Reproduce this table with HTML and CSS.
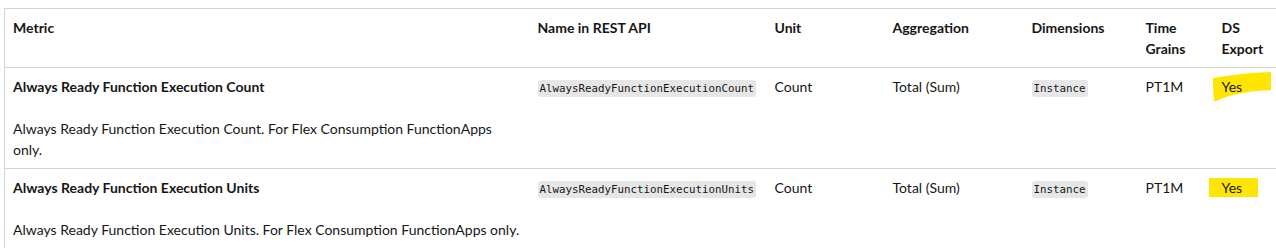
FILE: index.html
```html
<!DOCTYPE html>
<html lang="en">
<head>
<meta charset="utf-8">
<title>Metrics</title>
<link rel="stylesheet" href="styles.css">
</head>
<body>
<table class="metrics">
  <colgroup>
    <col class="c-metric"><col class="c-rest"><col class="c-unit"><col class="c-agg"><col class="c-dim"><col class="c-grain"><col class="c-ds">
  </colgroup>
  <thead>
    <tr>
      <th>Metric</th>
      <th>Name in REST API</th>
      <th>Unit</th>
      <th>Aggregation</th>
      <th>Dimensions</th>
      <th>Time Grains</th>
      <th>DS Export</th>
    </tr>
  </thead>
  <tbody>
    <tr>
      <td><strong>Always Ready Function Execution Count</strong><br><br>Always Ready Function Execution Count. For Flex Consumption FunctionApps only.</td>
      <td><code>AlwaysReadyFunctionExecutionCount</code></td>
      <td>Count</td>
      <td>Total (Sum)</td>
      <td><code>Instance</code></td>
      <td>PT1M</td>
      <td class="ds"><span class="mark mark-drawn"><svg class="marker" viewBox="0 0 60 30" width="60" height="30" aria-hidden="true"><path d="M1 6 C15 4 30 1 59 0 L59 18 C40 19 22 21 4 29 L2 29 C1 20 1 12 1 6 Z" fill="#ffe600"/></svg><span class="mark-text">Yes</span></span></td>
    </tr>
    <tr>
      <td><strong>Always Ready Function Execution Units</strong><br><br>Always Ready Function Execution Units. For Flex Consumption FunctionApps only.</td>
      <td><code>AlwaysReadyFunctionExecutionUnits</code></td>
      <td>Count</td>
      <td>Total (Sum)</td>
      <td><code>Instance</code></td>
      <td>PT1M</td>
      <td class="ds"><span class="mark mark-box">Yes</span></td>
    </tr>
  </tbody>
</table>
</body>
</html>
```

FILE: styles.css
```css
html, body {
  background: #ffffff;
}
body {
  margin: 8px 0 0 4px;
  overflow: hidden;
  font-family: "Segoe UI", Lato, "Liberation Sans", Arial, sans-serif;
  font-size: 14px;
  line-height: 21px;
  color: #161616;
}
.metrics {
  table-layout: fixed;
  border-collapse: collapse;
  width: 1285px;
  border-top: 1px solid #d4d4d4;
  border-left: 1px solid #d4d4d4;
}
.c-metric { width: 525px; }
.c-rest { width: 237px; }
.c-unit { width: 118px; }
.c-agg { width: 139px; }
.c-dim { width: 114px; }
.c-grain { width: 76px; }
.c-ds { width: 76px; }

.metrics th,
.metrics td {
  padding: 8px 8px;
  text-align: left;
  vertical-align: top;
  border-bottom: 1px solid #d4d4d4;
}
.metrics th {
  font-weight: 700;
}
.metrics strong {
  font-weight: 700;
}
.metrics code {
  display: inline-block;
  font-family: "DejaVu Sans Mono", "Liberation Mono", monospace;
  font-size: 10.8px;
  line-height: 17px;
  padding: 0 2px;
  background: #e6e6e6;
  border-radius: 3px;
  color: #161616;
}
.ds {
  position: relative;
}
.mark {
  position: relative;
  display: inline-block;
}
.mark-drawn .marker {
  position: absolute;
  left: -10px;
  top: -4px;
}
.mark-text {
  position: relative;
}
.mark-box {
  background: #ffe600;
  padding: 0 16px 0 13px;
  margin-left: -13px;
  line-height: 19px;
}
```
